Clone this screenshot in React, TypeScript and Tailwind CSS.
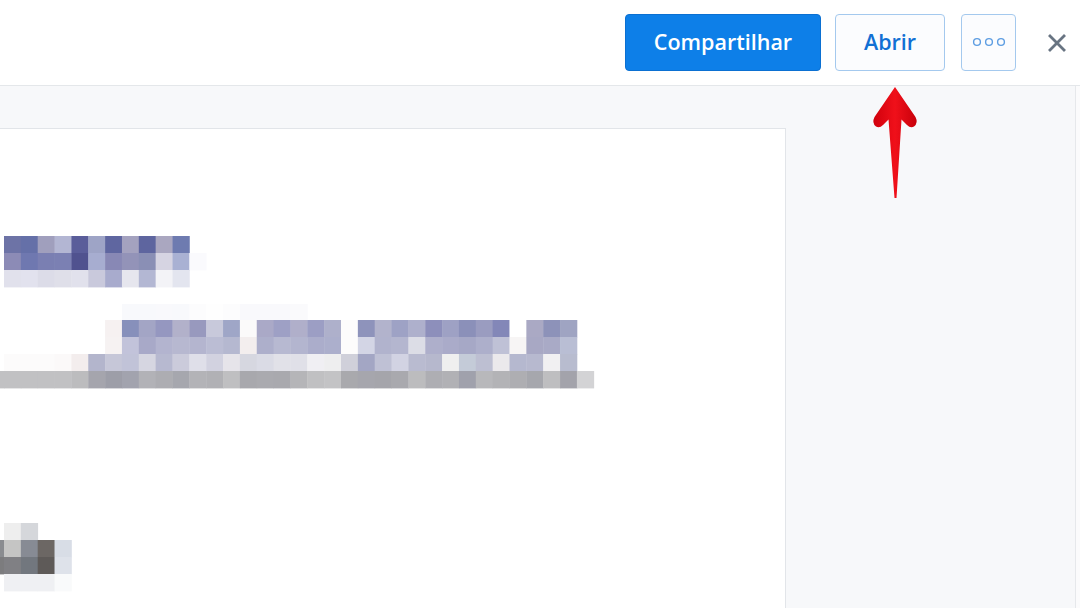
import React from "react";

type Row = { y: number; start: number; colors: string[] };

const STEP = 16.85;
const X0 = 4;

// blurred document text, drawn as mosaic blocks
const rows: Row[] = [
  // title
  { y: 236, start: 0, colors: ["#6d73a6", "#6570a8", "#a09fbd", "#b3b6d3", "#5a5d9a", "#9ea4c6", "#5f66a0", "#a4a2bf", "#5e659f", "#aaa7c0", "#6e7bb0"] },
  { y: 253, start: 0, colors: ["#8c8bb6", "#6f78b0", "#7a7fb2", "#7b80b3", "#50528f", "#a7add0", "#8888b5", "#9393b8", "#8a8fb5", "#d6d4e2", "#a9b1d3", "#fafafd"] },
  { y: 270, start: 0, colors: ["#e1e1ec", "#e2e2ee", "#dcdce8", "#dfdfe9", "#e1e1ec", "#c9c9dc", "#a8abcd", "#e6e6ee", "#b3b7d3", "#f3f3f7", "#e3e5ef"] },
  // second block
  { y: 304, start: 7, colors: ["#f8f9fc", "#f8f9fc", "#f9f9fc", "#f8f9fc", "#fcfcfd", "#fefefe", "#fcfcfd", "#f9f9fc", "#f9f9fc", "#f9f9fc", "#fafafc"] },
  { y: 320, start: 6, colors: ["#f6f1f1", "#8790bb", "#a3a5c5", "#9597c0", "#b2b1ca", "#9899be", "#c8c9db", "#9fa6c7", "#fbfafa", "#aaa9c7", "#9ea0c5", "#b0afca", "#9c9ec4", "#aeb0cb", "#fdfcfc", "#8e93bb", "#b2b3cc", "#9ea2c5", "#aeb0cc", "#8d8fbb", "#9ea1c4", "#8b90b9", "#9a9cc0", "#8387b8", "#ffffff", "#aaa9c4", "#8d92b9", "#9fa4c2"] },
  { y: 337, start: 6, colors: ["#f6f2f2", "#c2c3da", "#a8a9c8", "#b3b4cf", "#b7b8d0", "#b4b5cf", "#bbbdd4", "#b5b8d0", "#f3eeee", "#adafcb", "#b7b9d1", "#b3b5cf", "#abadcb", "#acafcc", "#fdfcfc", "#d3d5e5", "#b1b3cd", "#b4b6cf", "#dcdde6", "#aeafcb", "#aaabc9", "#a6a8c6", "#adafcb", "#bfc1d6", "#f7f5f5", "#a8a8c4", "#a9aac6", "#b9bed4"] },
  { y: 354, start: 0, colors: ["#fcfbfb", "#fcfbfb", "#fcfbfb", "#fbf9f9", "#f3eded", "#b3b5cc", "#c6c7d8", "#c1c3d8", "#d6d6e1", "#b7b9d0", "#cbcbdb", "#dfdfe9", "#d2d2e0", "#e6e4ea", "#d6d7e0", "#dadbe5", "#e1e1e8", "#e0e0e8", "#f0eff3", "#eeeeef", "#d0d0da", "#a3a6c4", "#bfc1d5", "#d2d3e3", "#b9bbd0", "#b6b8cd", "#efefef", "#c4cbd8", "#bdbfd2", "#ebe9ec", "#b5b8cf", "#b7b9cf", "#f1f0f2", "#b8bccf"] },
  { y: 371, start: -1, colors: ["#c1c1c3", "#c1c1c3", "#c1c1c3", "#c1c1c3", "#c1c1c3", "#bcbcbe", "#a5a5ad", "#9d9ea8", "#a2a3ae", "#b2b2b7", "#adadb2", "#a6a7ae", "#b3b3b7", "#b1b1b5", "#bfbfc1", "#a8a8ad", "#aaaaaf", "#a9a9ae", "#b5b5b8", "#c0c0c2", "#c3c3c5", "#a9a9ad", "#a6a6ad", "#a5a5ab", "#a9a9ae", "#bcbcbe", "#aeaeb3", "#b1b1b5", "#a0a1ac", "#b8b8bb", "#b3b3b6", "#aeaeb2", "#a6a7ad", "#bebec0", "#a3a3ab", "#d3d3d5"] },
  // third block
  { y: 523, start: 0, colors: ["#eeeeee", "#d5d7db"] },
  { y: 540, start: -1, colors: ["#8a8c90", "#c5c5c4", "#878b94", "#6c6764", "#d8dde6"] },
  { y: 557, start: -1, colors: ["#7c7c7e", "#808084", "#72777e", "#5e5a58", "#dee2ea"] },
  { y: 574, start: 0, colors: ["#eff0f3", "#eff0f3", "#eff0f3", "#f9fafb"] },
];

function BlurredText() {
  return (
    <svg className="block" width="785" height="479" viewBox="0 129 785 479">
      {rows.map((r) =>
        r.colors.map((c, k) => (
          <rect
            key={`${r.y}-${k}`}
            x={X0 + STEP * (r.start + k)}
            y={r.y}
            width={STEP + 0.4}
            height={17.4}
            fill={c}
          />
        ))
      )}
    </svg>
  );
}

export default function App() {
  return (
    <div className="relative w-[1080px] h-[608px] overflow-hidden bg-white flex flex-col font-['Open_Sans',sans-serif]">
      <header className="h-[86px] shrink-0 flex items-center justify-end border-b border-[#e4e7ea] bg-white pr-[11px]">
        <button className="h-[57px] w-[196px] rounded-[4px] bg-[#0d7fe8] border border-[#0b70d2] text-white text-[21.5px] font-semibold mt-[-1px]">
          Compartilhar
        </button>
        <button className="ml-[14px] h-[57px] w-[110px] rounded-[4px] bg-[#fbfcfe] border border-[#a4c9ee] text-[#1170d4] text-[21.5px] font-semibold mt-[-1px]">
          Abrir
        </button>
        <button className="ml-[16px] h-[57px] w-[55px] rounded-[4px] bg-[#fbfcfe] border border-[#a4c9ee] flex items-center justify-center mt-[-1px]">
          <svg width="34" height="10" viewBox="0 0 34 10">
            <circle cx="5" cy="5" r="3.4" fill="none" stroke="#5d9de2" strokeWidth="1.4" />
            <circle cx="17" cy="5" r="3.4" fill="none" stroke="#5d9de2" strokeWidth="1.4" />
            <circle cx="29" cy="5" r="3.4" fill="none" stroke="#5d9de2" strokeWidth="1.4" />
          </svg>
        </button>
        <button className="ml-[29px] w-[24px] h-[24px] flex items-center justify-center">
          <svg width="20" height="20" viewBox="0 0 20 20">
            <path d="M3 3 L17 17 M17 3 L3 17" stroke="#687482" strokeWidth="2.8" strokeLinecap="square" />
          </svg>
        </button>
      </header>

      <main className="flex-1 flex bg-[#f7f8fa]">
        <div className="pt-[42px]">
          <div className="w-[786px] h-full bg-white border-t border-r border-[#e2e5e9]">
            <BlurredText />
          </div>
        </div>
        <div className="flex-1" />
        <div className="w-[5px] border-l border-[#e6e8eb] bg-[#fbfbfc]" />
      </main>

      {/* annotation arrow */}
      <svg className="absolute left-[868px] top-[84px]" width="56" height="118" viewBox="868 84 56 118">
        <defs>
          <linearGradient id="arrowShade" x1="0" x2="1" y1="0" y2="0">
            <stop offset="0" stopColor="#d0000c" />
            <stop offset="0.5" stopColor="#f0101a" />
            <stop offset="1" stopColor="#c8000a" />
          </linearGradient>
        </defs>
        <path
          d="M895 87 L915.5 117 Q918.5 123 914 126.5 Q910.5 128.5 907 125 L901.5 119.5 L896.5 198 L894.5 198 L888.5 119.5 L883 125 Q879.5 128.5 876 126.5 Q871.5 123 874.5 117 Z"
          fill="url(#arrowShade)"
        />
      </svg>
    </div>
  );
}
